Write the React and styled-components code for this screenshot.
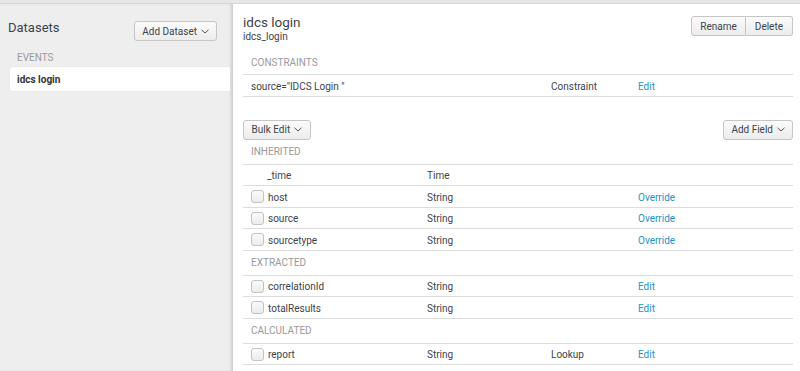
import React from 'react';
import styled, { createGlobalStyle } from 'styled-components';

const GlobalStyle = createGlobalStyle`
    html, body {
        margin: 0;
        padding: 0;
        background: #fff;
    }
    body {
        font-family: Roboto, "Liberation Sans", sans-serif;
        font-size: 10px;
        color: #3c444d;
    }
    * { box-sizing: border-box; }
`

const TopStrip = styled.div`
    height: 4px;
    background: #e6e6e6;
    border-bottom: 1px solid #d6d6d6;
`
const Layout = styled.div`
    display: flex;
    height: calc(100vh - 4px);
`
const Sidebar = styled.aside`
    width: 233px;
    flex-shrink: 0;
    background: #eeeeee;
    box-shadow: inset -3px 0 3px -1px rgba(0,0,0,0.14);
    padding: 15px 0 0 0;
`
const SideHeader = styled.div`
    display: flex;
    justify-content: space-between;
    align-items: center;
    padding: 0 16px 0 8px;
`
const SideTitle = styled.h1`
    margin: 0 0 6px 0;
    font-size: 13px;
    line-height: 18px;
    font-weight: 400;
    color: #3c444d;
`
const GroupLabel = styled.div`
    font-size: 10px;
    color: #9a9a9a;
    text-transform: uppercase;
    padding-left: ${p => p.$indent || 8}px;
    height: ${p => p.$h || 25}px;
    display: flex;
    align-items: center;
    border-bottom: ${p => p.$line ? '1px solid #dcdcdc' : 'none'};
`
const SideList = styled.div`
    margin-top: 4px;
    padding-left: 10px;
`
const SideItem = styled.div`
    background: #fff;
    height: 24px;
    margin-right: 3px;
    border-radius: 2px 0 0 2px;
    box-shadow: 0 0 1px rgba(0,0,0,0.2);
    display: flex;
    align-items: center;
    padding-left: 7px;
    font-weight: 700;
    color: #333;
`
const Main = styled.main`
    flex: 1;
    padding: 9px 7px 0 10px;
    overflow: hidden;
`
const Header = styled.div`
    display: flex;
    justify-content: space-between;
    align-items: flex-start;
`
const Title = styled.h2`
    margin: 0;
    font-size: 13.5px;
    line-height: 18px;
    font-weight: 400;
    color: #3c444d;
`
const Subtitle = styled.div`
    font-size: 10px;
    line-height: 12px;
    color: #3c444d;
`
const Button = styled.button`
    font-family: inherit;
    font-size: 10px;
    color: #3c444d;
    height: 20px;
    padding: 0 ${p => p.$pad || 9}px;
    background: linear-gradient(#fbfbfb, #ececec);
    border: 1px solid #c6c6c6;
    border-radius: 3px;
    display: inline-flex;
    align-items: center;
    gap: 4px;
    cursor: pointer;
`
const ButtonGroup = styled.div`
    display: flex;
    margin-top: 3px;
    ${Button}:first-child {
        border-radius: 3px 0 0 3px;
    }
    ${Button}:last-child {
        border-radius: 0 3px 3px 0;
        border-left: none;
    }
`
const Section = styled.div`
    margin-top: ${p => p.$top || 0}px;
`
const Toolbar = styled.div`
    display: flex;
    justify-content: space-between;
    margin-top: 23px;
`
const Row = styled.div`
    display: grid;
    grid-template-columns: 176px 124px 87px 1fr;
    height: 21.5px;
    align-items: center;
    border-bottom: 1px solid #dcdcdc;
    padding: 2px 0 0 8px;
    color: #3c444d;
`
const NameCell = styled.div`
    display: flex;
    align-items: center;
    gap: 4px;
    padding-left: ${p => p.$indent ? 16 : 0}px;
`
const Checkbox = styled.span`
    width: 13px;
    height: 13px;
    margin-top: -1px;
    border: 1px solid #c3c3c3;
    border-radius: 3px;
    background: linear-gradient(#fafafa, #ececec);
    flex-shrink: 0;
`
const Link = styled.a`
    color: #1e93c6;
    text-decoration: none;
    cursor: pointer;
`

const Chevron = () => (
    <svg width="8" height="5" viewBox="0 0 8 5" fill="none">
        <polyline points="0.5,0.8 4,4 7.5,0.8" stroke="#555" strokeWidth="1" />
    </svg>
);

const sections = [
    {
        label: 'Inherited',
        rows: [
            { name: '_time', type: 'Time', noCheck: true },
            { name: 'host', type: 'String', action: 'Override' },
            { name: 'source', type: 'String', action: 'Override' },
            { name: 'sourcetype', type: 'String', action: 'Override' },
        ],
    },
    {
        label: 'Extracted',
        rows: [
            { name: 'correlationId', type: 'String', action: 'Edit' },
            { name: 'totalResults', type: 'String', action: 'Edit' },
        ],
    },
    {
        label: 'Calculated',
        rows: [
            { name: 'report', type: 'String', kind: 'Lookup', action: 'Edit' },
        ],
    },
];

const App = () => {
    return (
        <>
            <GlobalStyle />
            <TopStrip />
            <Layout>
                <Sidebar>
                    <SideHeader>
                        <SideTitle>Datasets</SideTitle>
                        <Button $pad={7}>Add Dataset <Chevron /></Button>
                    </SideHeader>
                    <SideList>
                        <GroupLabel $indent={7} $h={20}>Events</GroupLabel>
                        <SideItem>idcs login</SideItem>
                    </SideList>
                </Sidebar>
                <Main>
                    <Header>
                        <div>
                            <Title>idcs login</Title>
                            <Subtitle>idcs_login</Subtitle>
                        </div>
                        <ButtonGroup>
                            <Button $pad={8}>Rename</Button>
                            <Button $pad={9}>Delete</Button>
                        </ButtonGroup>
                    </Header>
                    <Section $top={7}>
                        <GroupLabel $line>Constraints</GroupLabel>
                        <Row>
                            <div>source="IDCS Login "</div>
                            <div></div>
                            <div>Constraint</div>
                            <div><Link>Edit</Link></div>
                        </Row>
                    </Section>
                    <Toolbar>
                        <Button $pad={7.5}>Bulk Edit <Chevron /></Button>
                        <Button $pad={7}>Add Field <Chevron /></Button>
                    </Toolbar>
                    {sections.map(s => (
                        <Section key={s.label}>
                            <GroupLabel $line>{s.label}</GroupLabel>
                            {s.rows.map(r => (
                                <Row key={r.name}>
                                    <NameCell $indent={r.noCheck}>
                                        {!r.noCheck && <Checkbox />}
                                        {r.name}
                                    </NameCell>
                                    <div>{r.type}</div>
                                    <div>{r.kind || ''}</div>
                                    <div>{r.action && <Link>{r.action}</Link>}</div>
                                </Row>
                            ))}
                        </Section>
                    ))}
                </Main>
            </Layout>
        </>
    );
};

export default App;
